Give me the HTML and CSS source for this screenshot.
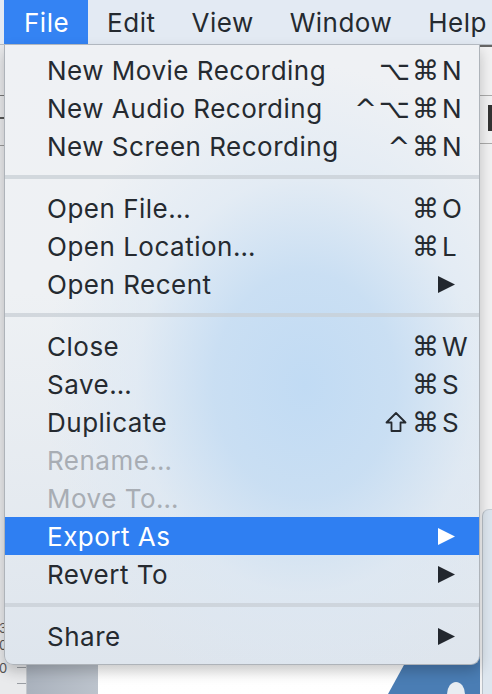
FILE: index.html
```html
<!doctype html>
<html lang="en">
  <head>
    <meta charset="utf-8">
    <title>File menu</title>
    <link rel="stylesheet" href="styles.css">
  </head>
  <body>
    <div class="screen">
      <nav class="menubar">
        <span class="title active">File</span>
        <span class="title">Edit</span>
        <span class="title">View</span>
        <span class="title">Window</span>
        <span class="title">Help</span>
      </nav>

      <!-- the document window behind the open menu -->
      <div class="desk">
        <div class="edge-left">
          <span class="tick t1">3</span>
          <span class="tick t2">0</span>
          <span class="tick t3">0</span>
        </div>
        <div class="ruler-col"></div>
        <div class="canvas">
          <svg class="wave" width="120" height="40" viewBox="0 0 120 40">
            <polygon points="28,40 50,0 120,0 120,40" fill="#4a7db4"/>
            <ellipse cx="96" cy="40" rx="9" ry="12" fill="#e8edf2"/>
          </svg>
        </div>
        <div class="edge-right">
          <div class="submenu-peek"></div>
        </div>
      </div>

      <div class="menu">
        <div class="item"><span class="label">New Movie Recording</span><span class="mods">⌥⌘</span><span class="key">N</span></div>
        <div class="item"><span class="label">New Audio Recording</span><span class="mods">^⌥⌘</span><span class="key">N</span></div>
        <div class="item"><span class="label">New Screen Recording</span><span class="mods">^⌘</span><span class="key">N</span></div>
        <div class="sep"></div>
        <div class="item"><span class="label">Open File…</span><span class="mods">⌘</span><span class="key">O</span></div>
        <div class="item"><span class="label">Open Location…</span><span class="mods">⌘</span><span class="key">L</span></div>
        <div class="item"><span class="label">Open Recent</span><svg class="arrow" viewBox="0 0 16 16"><polygon points="0,0 16,8 0,16"/></svg></div>
        <div class="sep"></div>
        <div class="item"><span class="label">Close</span><span class="mods">⌘</span><span class="key">W</span></div>
        <div class="item"><span class="label">Save…</span><span class="mods">⌘</span><span class="key">S</span></div>
        <div class="item">
          <span class="label">Duplicate</span>
          <svg class="shift" viewBox="0 0 22 22"><polygon points="11,2 20.5,11.5 15.5,11.5 15.5,20 6.5,20 6.5,11.5 1.5,11.5"/></svg>
          <span class="mods">⌘</span><span class="key">S</span>
        </div>
        <div class="item disabled"><span class="label">Rename…</span></div>
        <div class="item disabled"><span class="label">Move To…</span></div>
        <div class="item selected"><span class="label">Export As</span><svg class="arrow" viewBox="0 0 16 16"><polygon points="0,0 16,8 0,16"/></svg></div>
        <div class="item"><span class="label">Revert To</span><svg class="arrow" viewBox="0 0 16 16"><polygon points="0,0 16,8 0,16"/></svg></div>
        <div class="sep"></div>
        <div class="item"><span class="label">Share</span><svg class="arrow" viewBox="0 0 16 16"><polygon points="0,0 16,8 0,16"/></svg></div>
      </div>
    </div>
  </body>
</html>
```

FILE: styles.css
```css
body {
    margin: 0;
    font-family: Inter, "Liberation Sans", sans-serif;
    color: #252a30;
    overflow: hidden;
}

.screen {
    position: relative;
    width: 492px;
    height: 694px;
    overflow: hidden;
    display: flex;
    flex-direction: column;
}

/* menu bar */
.menubar {
    display: flex;
    height: 44px;
    padding-left: 4px;
    background: #e3eaf3;
    border-bottom: 1px solid #b8bec6;
    font-size: 26px;
    letter-spacing: 0.5px;
    white-space: nowrap;
}

.title {
    display: flex;
    align-items: center;
    padding: 0 17px 0 19px;
}

.title.active {
    padding: 0 19px 0 20px;
    background: #3483f3;
    color: #fff;
}

/* window behind the menu */
.desk {
    flex: 1;
    display: grid;
    grid-template-columns: 27px 71px 1fr 12px;
    background: #ececee;
}

.edge-left {
    position: relative;
    background:
        linear-gradient(#777 0 0) 0 50px / 100% 1px no-repeat,
        linear-gradient(#555 0 0) 0 72px / 100% 2px no-repeat,
        linear-gradient(#999 0 0) 0 100px / 100% 1px no-repeat,
        linear-gradient(#9a9ea4 0 0) 17px 622px / 10px 1px no-repeat,
        linear-gradient(#9a9ea4 0 0) 17px 638px / 10px 1px no-repeat,
        #e9eaec;
    border-right: 1px solid #c4c8cd;
}

.tick {
    position: absolute;
    left: -1px;
    font-size: 13px;
    line-height: 13px;
    color: #555;
}

.t1 { top: 577px; }
.t2 { top: 594px; }
.t3 { top: 617px; }

.ruler-col {
    background: linear-gradient(90deg, #aab2bd, #bcc3cc);
}

.canvas {
    display: flex;
    align-items: flex-end;
    justify-content: flex-end;
    background: linear-gradient(#d9dadc, #f7f7f7 40%, #ffffff);
}

.wave {
    display: block;
}

.edge-right {
    display: flex;
    flex-direction: column;
    justify-content: flex-end;
    background:
        linear-gradient(#666 0 0) 0 0 / 100% 2px no-repeat,
        linear-gradient(#aaa 0 0) 0 50px / 100% 1px no-repeat,
        linear-gradient(#333 0 0) 8px 60px / 4px 26px no-repeat,
        linear-gradient(#aaa 0 0) 0 98px / 100% 1px no-repeat,
        #f2f2f3;
}

.submenu-peek {
    height: 184px;
    margin-left: 2px;
    background: #dde6ef;
    border-top-left-radius: 7px;
    border-left: 1px solid #b9c0c8;
    border-top: 1px solid #c7ced6;
}

/* the open File menu */
.menu {
    position: absolute;
    left: 4px;
    top: 45px;
    width: 474px;
    padding: 6px 0 9px;
    font-size: 26px;
    letter-spacing: 0.5px;
    background:
        radial-gradient(ellipse 260px 320px at 300px 340px, #c1dbf4, rgba(198, 221, 243, 0.9) 35%, rgba(218, 231, 244, 0.55) 65%, rgba(238, 241, 245, 0) 100%),
        linear-gradient(#eff1f4, #eef1f4 40%, #dee5ed);
    border: 1px solid #aeb3b9;
    border-top: none;
    border-radius: 0 0 9px 9px;
    box-shadow: 0 6px 14px rgba(0, 0, 0, 0.22);
}

.item {
    display: flex;
    align-items: center;
    height: 38px;
    padding: 0 12px 0 42px;
    white-space: nowrap;
}

.label {
    flex: 1;
}

.mods {
    font-family: "DejaVu Sans", sans-serif;
    font-size: 27px;
    letter-spacing: 2px;
    text-align: right;
}

.key {
    width: 25px;
    padding-left: 1px;
    letter-spacing: 0;
}

.shift {
    width: 22px;
    height: 22px;
    margin-right: 5px;
    fill: none;
    stroke: #252a30;
    stroke-width: 1.8;
    stroke-linejoin: round;
}

.arrow {
    width: 17px;
    height: 17px;
    margin-right: 12px;
    fill: #22272e;
}

.disabled {
    color: #a8adb4;
}

.selected {
    background: #2f7ff2;
    color: #fff;
}

.selected .arrow {
    fill: #fff;
}

.sep {
    height: 4px;
    margin: 10px 0;
    background: rgba(200, 207, 214, 0.75);
}
```
